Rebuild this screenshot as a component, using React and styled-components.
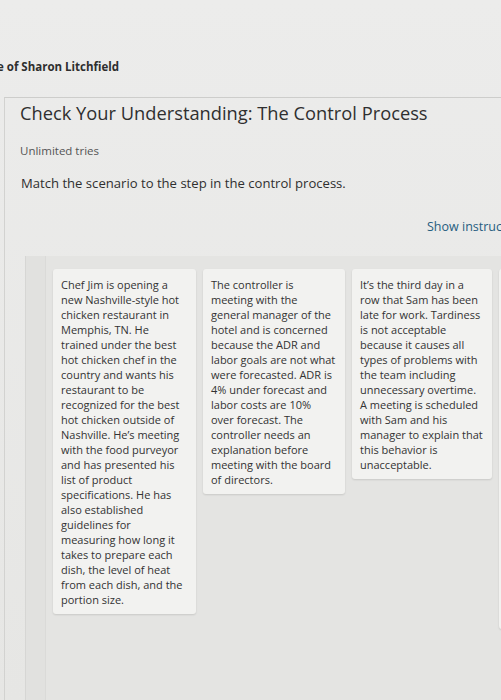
import React from "react";
import styled, { createGlobalStyle } from "styled-components";

const Global = createGlobalStyle`
  html, body { margin: 0; padding: 0; }
  body {
    background: #e9e9e7;
    font-family: "Open Sans", "Noto Sans", sans-serif;
    color: #333;
    overflow: hidden;
    width: 501px;
    height: 700px;
  }
`;

const Page = styled.div`
  width: 501px;
  height: 700px;
  overflow: hidden;
  background: linear-gradient(180deg, #ececeb 0%, #e6e6e4 100%);
`;

const TopBar = styled.div`
  height: 97px;
  box-sizing: border-box;
  padding-top: 59px;
  margin-left: -3px;
  font-size: 11.5px;
  font-weight: 700;
  color: #2e2e2e;
  white-space: nowrap;
`;

const Panel = styled.div`
  margin-left: 4px;
  width: 600px;
  border-top: 1px solid #cdcdcb;
  border-left: 1px solid #d2d2d0;
  padding: 3px 0 0 15px;
  box-sizing: border-box;
  height: 620px;
`;

const Title = styled.h1`
  margin: 0;
  font-size: 18.3px;
  line-height: 24px;
  font-weight: 400;
  color: #2f2f2f;
`;

const Tries = styled.div`
  margin-top: 18px;
  font-size: 11.5px;
  line-height: 16px;
  color: #555;
`;

const Prompt = styled.p`
  margin: 14px 0 0 1px;
  font-size: 13.1px;
  line-height: 20px;
  color: #2f2f2f;
`;

const LinkRow = styled.div`
  display: flex;
  margin-top: 25px;
  padding-left: 407px;
`;

const Link = styled.span`
  font-size: 12.5px;
  line-height: 18px;
  color: #265d80;
  white-space: nowrap;
`;

const DropArea = styled.div`
  margin-top: 20px;
  margin-left: 5px;
  background: #e1e1df;
  border-left: 1px solid #d6d6d4;
  padding-left: 19px;
  height: 460px;
`;

const Pool = styled.div`
  display: flex;
  align-items: flex-start;
  gap: 7px;
  padding: 13px 0 0 7px;
  height: 100%;
  box-sizing: border-box;
  background: #e4e4e2;
  border-left: 1px solid #dadad8;
`;

const Card = styled.div`
  flex: 0 0 ${(p) => p.$w}px;
  box-sizing: border-box;
  background: #f2f2f0;
  border-radius: 3px;
  box-shadow: 0 1px 2px rgba(0, 0, 0, 0.12);
  padding: 8px 6px 7px 8px;
  font-size: 11px;
  line-height: 15px;
  color: #333;
  min-height: ${(p) => p.$minH || 0}px;
`;

const Line = styled.span`
  display: block;
  white-space: nowrap;
`;

const cards = [
  {
    w: 143,
    lines: [
      "Chef Jim is opening a",
      "new Nashville-style hot",
      "chicken restaurant in",
      "Memphis, TN. He",
      "trained under the best",
      "hot chicken chef in the",
      "country and wants his",
      "restaurant to be",
      "recognized for the best",
      "hot chicken outside of",
      "Nashville. He’s meeting",
      "with the food purveyor",
      "and has presented his",
      "list of product",
      "specifications. He has",
      "also established",
      "guidelines for",
      "measuring how long it",
      "takes to prepare each",
      "dish, the level of heat",
      "from each dish, and the",
      "portion size.",
    ],
  },
  {
    w: 142,
    lines: [
      "The controller is",
      "meeting with the",
      "general manager of the",
      "hotel and is concerned",
      "because the ADR and",
      "labor goals are not what",
      "were forecasted. ADR is",
      "4% under forecast and",
      "labor costs are 10%",
      "over forecast. The",
      "controller needs an",
      "explanation before",
      "meeting with the board",
      "of directors.",
    ],
  },
  {
    w: 140,
    lines: [
      "It’s the third day in a",
      "row that Sam has been",
      "late for work. Tardiness",
      "is not acceptable",
      "because it causes all",
      "types of problems with",
      "the team including",
      "unnecessary overtime.",
      "A meeting is scheduled",
      "with Sam and his",
      "manager to explain that",
      "this behavior is",
      "unacceptable.",
    ],
  },
  { w: 140, lines: [], minH: 360 },
];

export default function App() {
  return (
    <Page>
      <Global />
      <TopBar>e of Sharon Litchfield</TopBar>
      <Panel>
        <Title>Check Your Understanding: The Control Process</Title>
        <Tries>Unlimited tries</Tries>
        <Prompt>Match the scenario to the step in the control process.</Prompt>
        <LinkRow>
          <Link>Show instructions</Link>
        </LinkRow>
        <DropArea>
          <Pool>
            {cards.map((c, i) => (
              <Card key={i} $w={c.w} $minH={c.minH}>
                {c.lines.map((l, j) => (
                  <Line key={j}>{l}</Line>
                ))}
              </Card>
            ))}
          </Pool>
        </DropArea>
      </Panel>
    </Page>
  );
}
